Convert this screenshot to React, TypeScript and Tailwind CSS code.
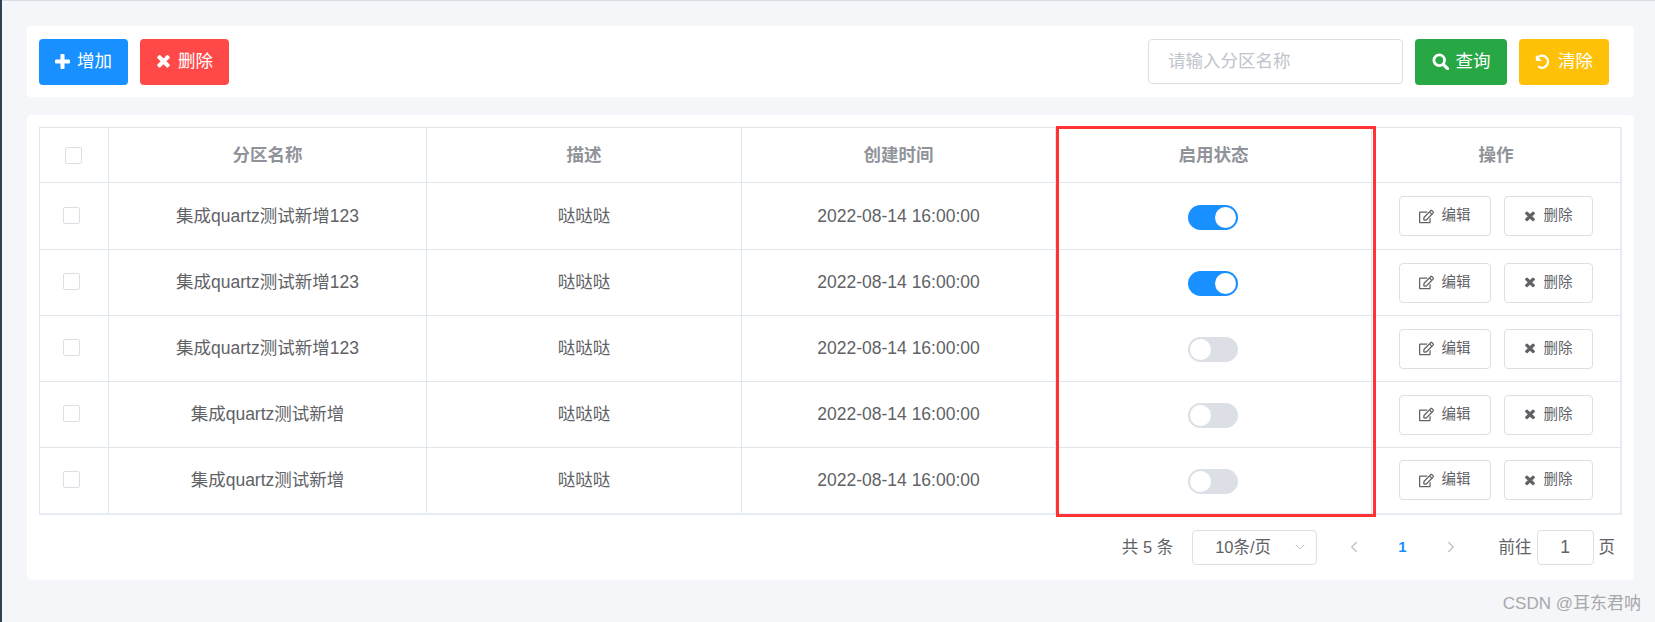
import React from 'react';
import { FaRegEdit } from 'react-icons/fa';
import { ChevronDown, ChevronLeft, ChevronRight } from 'lucide-react';

const rows = [
  { name: '集成quartz测试新增123', on: true },
  { name: '集成quartz测试新增123', on: true },
  { name: '集成quartz测试新增123', on: false },
  { name: '集成quartz测试新增', on: false },
  { name: '集成quartz测试新增', on: false },
];

const TimesIcon = ({ className }: { className: string }) => (
  <svg viewBox="0 0 1408 1792" fill="currentColor" className={className}>
    <path d="M1298 1242q0 40-28 68l-136 136q-28 28-68 28t-68-28l-294-294-294 294q-28 28-68 28t-68-28l-136-136q-28-28-28-68t28-68l294-294-294-294q-28-28-28-68t28-68l136-136q28-28 68-28t68 28l294 294 294-294q28-28 68-28t68 28l136 136q28 28 28 68t-28 68l-294 294 294 294q28 28 28 68z" />
  </svg>
);

const PlusIcon = ({ className }: { className: string }) => (
  <svg viewBox="0 0 1408 1792" fill="currentColor" className={className}>
    <path d="M1408 800v192q0 40-28 68t-68 28h-416v416q0 40-28 68t-68 28h-192q-40 0-68-28t-28-68v-416h-416q-40 0-68-28t-28-68v-192q0-40 28-68t68-28h416v-416q0-40 28-68t68-28h192q40 0 68 28t28 68v416h416q40 0 68 28t28 68z" />
  </svg>
);

const SearchIcon = ({ className }: { className: string }) => (
  <svg viewBox="0 0 16 16" fill="none" stroke="currentColor" className={className}>
    <circle cx="6.8" cy="6.8" r="5" strokeWidth="2.6" />
    <path d="M10.6 10.6L14.6 14.6" strokeWidth="3" strokeLinecap="round" />
  </svg>
);

const UndoIcon = ({ className }: { className: string }) => (
  <svg viewBox="0 0 16 16" fill="none" stroke="currentColor" className={className}>
    <path d="M3 3.2A6 6 0 1 1 3.2 12.4" strokeWidth="2.4" />
    <path d="M0.8 1V7H6.8Z" fill="currentColor" stroke="none" />
  </svg>
);

const Checkbox = ({ className }: { className: string }) => (
  <span className={`block h-[17px] w-[17px] rounded-[2px] border border-[#dcdfe6] bg-white ${className}`} />
);

const Switch = ({ on }: { on: boolean }) => (
  <span className={`mx-auto flex h-[25px] w-[50px] items-center rounded-full px-[2px] ${on ? 'justify-end bg-[#1890ff]' : 'justify-start bg-[#dcdfe6]'}`}>
    <span className="block h-[21px] w-[21px] rounded-full bg-white" />
  </span>
);

const ToolButton = ({ icon, label, className }: { icon: React.ReactNode; label: string; className: string }) => (
  <button type="button" className={`flex h-[46px] items-center justify-center gap-[7px] rounded-[4px] text-[17.5px] text-white ${className}`}>
    {icon}
    <span>{label}</span>
  </button>
);

const RowButton = ({ icon, label, className }: { icon: React.ReactNode; label: string; className: string }) => (
  <button type="button" className={`flex h-[40px] items-center justify-center gap-[8px] rounded-[4px] border border-[#dcdfe6] bg-white text-[14.5px] text-[#606266] ${className}`}>
    {icon}
    <span>{label}</span>
  </button>
);

export default function App() {
  return (
    <div className="relative flex h-[622px] w-[1655px] overflow-hidden bg-[#f5f6fa] font-['Liberation_Sans','Noto_Sans_CJK_SC',sans-serif]">
      <div className="w-[2px] shrink-0 bg-[#304156]" />
      <div className="flex-1 border-t border-[#d8dce5] pt-[25px] pl-[25px] pr-[21px]">
        <div className="flex h-[71px] items-center justify-between rounded-[4px] bg-white px-[12px]">
          <div className="flex gap-[12px]">
            <ToolButton className="w-[89px] bg-[#1890ff]" icon={<PlusIcon className="h-[19px] w-[15px]" />} label="增加" />
            <ToolButton className="w-[89px] bg-[#ff4949]" icon={<TimesIcon className="h-[19px] w-[15px]" />} label="删除" />
          </div>
          <div className="flex items-center gap-[12px] pr-[13px]">
            <div className="flex h-[45px] w-[255px] items-center rounded-[4px] border border-[#dcdfe6] pl-[19px] text-[17.5px] text-[#c0c4cc]">
              请输入分区名称
            </div>
            <ToolButton className="w-[92px] bg-[#28a745]" icon={<SearchIcon className="h-[17px] w-[17px]" />} label="查询" />
            <ToolButton className="w-[90px] bg-[#ffc107]" icon={<UndoIcon className="h-[16px] w-[16px]" />} label="清除" />
          </div>
        </div>

        <div className="relative mt-[18px] h-[465px] rounded-[4px] bg-white px-[12px] pt-[12px]">
          <table className="w-[1583px] table-fixed border-collapse border-r-2 border-b-2 border-[#e6ebf5] text-[17.5px] text-[#606266]">
            <colgroup>
              <col className="w-[69px]" />
              <col className="w-[318px]" />
              <col className="w-[315px]" />
              <col className="w-[314px]" />
              <col className="w-[316px]" />
              <col />
            </colgroup>
            <thead>
              <tr className="h-[55px] text-[#909399]">
                <th className="border border-[#dfe6ec]">
                  <Checkbox className="ml-[25px]" />
                </th>
                <th className="border border-[#dfe6ec] font-bold">分区名称</th>
                <th className="border border-[#dfe6ec] font-bold">描述</th>
                <th className="border border-[#dfe6ec] font-bold">创建时间</th>
                <th className="border border-[#dfe6ec] font-bold">启用状态</th>
                <th className="border border-[#dfe6ec] font-bold">操作</th>
              </tr>
            </thead>
            <tbody>
              {rows.map((row, i) => (
                <tr key={i} className={`text-center ${i === 0 ? 'h-[67px]' : 'h-[66px]'}`}>
                  <td className="border border-[#dfe6ec] pb-[2px]">
                    <Checkbox className="ml-[23px]" />
                  </td>
                  <td className="border border-[#dfe6ec]">{row.name}</td>
                  <td className="border border-[#dfe6ec]">哒哒哒</td>
                  <td className="border border-[#dfe6ec]">2022-08-14 16:00:00</td>
                  <td className="border border-[#dfe6ec] pt-[2px] pr-[2px]">
                    <Switch on={row.on} />
                  </td>
                  <td className="border border-[#dfe6ec] pr-[1px]">
                    <div className="flex justify-center gap-[13px]">
                      <RowButton className="w-[92px]" icon={<FaRegEdit className="h-[15px] w-[15px]" />} label="编辑" />
                      <RowButton className="w-[89px]" icon={<TimesIcon className="h-[15px] w-[12px]" />} label="删除" />
                    </div>
                  </td>
                </tr>
              ))}
            </tbody>
          </table>

          <div className="mt-[15px] flex h-[35px] items-center justify-end pr-[7px] text-[16.5px] text-[#606266]">
            <span>共 5 条</span>
            <div className="ml-[19px] flex h-[35px] w-[125px] items-center rounded-[4px] border border-[#dcdfe6] pl-[22px] pr-[8px]">
              <span className="flex-1 text-[16.5px]">10条/页</span>
              <ChevronDown className="h-[16px] w-[16px] text-[#c0c4cc]" strokeWidth={1.5} />
            </div>
            <ChevronLeft className="ml-[28px] h-[18px] w-[18px] text-[#c0c4cc]" strokeWidth={2} />
            <span className="ml-[35px] text-[15px] font-bold text-[#1890ff]">1</span>
            <ChevronRight className="ml-[35px] h-[18px] w-[18px] text-[#c0c4cc]" strokeWidth={2} />
            <span className="ml-[39px]">前往</span>
            <div className="ml-[5px] flex h-[35px] w-[57px] items-center justify-center rounded-[4px] border border-[#dcdfe6] text-[17.5px]">1</div>
            <span className="ml-[5px]">页</span>
          </div>

          {/* annotation drawn over the screenshot */}
          <div className="absolute top-[11px] left-[1029px] h-[391px] w-[320px] border-[3px] border-[#ff3333]" />
        </div>
      </div>
      <span className="absolute right-[14px] bottom-[6px] text-[17px] text-[#a8a8a8]">CSDN @耳东君呐</span>
    </div>
  );
}
